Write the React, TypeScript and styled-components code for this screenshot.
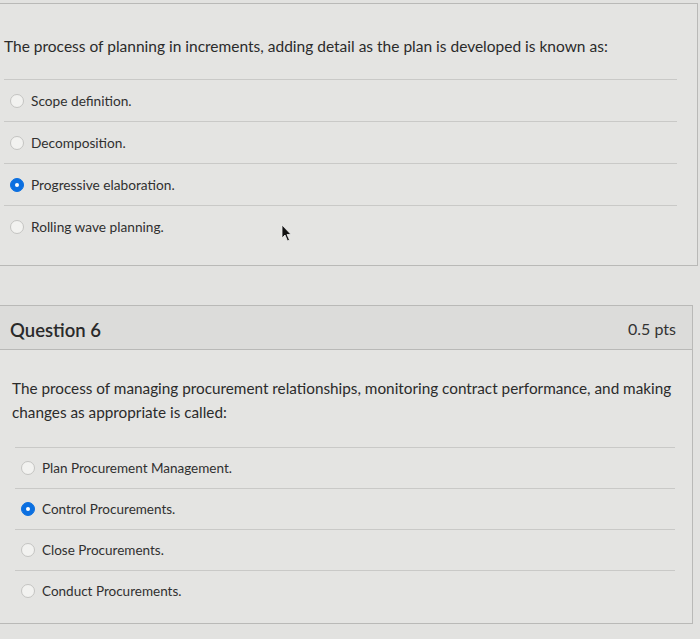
import React from "react";
import styled, { createGlobalStyle } from "styled-components";

const Global = createGlobalStyle`
  html, body { margin: 0; padding: 0; }
  body {
    background: #e2e2e0;
    font-family: Lato, "Open Sans", "Liberation Sans", sans-serif;
    color: #2d2d2d;
    width: 700px;
    height: 639px;
    overflow: hidden;
  }
`;

const Page = styled.div`
  position: relative;
  width: 700px;
  height: 639px;
  padding-top: 3px;
  box-sizing: border-box;
`;

const Card = styled.section<{ $right: number }>`
  border: 1px solid #b9b9b7;
  border-left: none;
  margin-right: ${(p) => p.$right}px;
  background: #e4e4e2;
`;

const Header = styled.header`
  display: flex;
  justify-content: space-between;
  align-items: center;
  height: 44px;
  padding: 4px 16px 0 10px;
  box-sizing: border-box;
  background: #dcdcda;
  border-bottom: 1px solid #b9b9b7;
`;

const Title = styled.h2`
  margin: 0;
  font-size: 18.5px;
  font-weight: 600;
  color: #2a2a2a;
`;

const Points = styled.span`
  font-size: 16px;
  color: #333;
  margin-bottom: 3px;
`;

const Body = styled.div<{ $pt: number; $pl: number; $pb: number }>`
  padding: ${(p) => p.$pt}px 0 ${(p) => p.$pb}px ${(p) => p.$pl}px;
`;

const QText = styled.p<{ $size: number }>`
  margin: 0;
  font-size: ${(p) => p.$size}px;
  line-height: 24px;
  color: #2b2b2b;
`;

const Answers = styled.ul<{ $mt: number; $ml: number; $mr: number }>`
  list-style: none;
  margin: ${(p) => p.$mt}px ${(p) => p.$mr}px 0 ${(p) => p.$ml}px;
  padding: 0;
`;

const Answer = styled.li<{ $h: number; $size: number }>`
  display: flex;
  align-items: center;
  gap: 7px;
  height: ${(p) => p.$h}px;
  border-top: 1px solid #c9c9c7;
  padding-left: 6px;
  font-size: ${(p) => p.$size}px;
  color: #303030;
`;

const Radio = styled.span<{ $on: boolean }>`
  width: 14px;
  height: 14px;
  border-radius: 50%;
  box-sizing: border-box;
  flex: none;
  display: flex;
  align-items: center;
  justify-content: center;
  background: ${(p) => (p.$on ? "#0b6fe0" : "#f2f2f0")};
  border: 1px solid ${(p) => (p.$on ? "#0b6fe0" : "#c4c4c2")};
  &::after {
    content: "";
    display: ${(p) => (p.$on ? "block" : "none")};
    width: 4px;
    height: 4px;
    border-radius: 50%;
    background: #fff;
  }
`;

const Gap = styled.div`
  height: 39px;
`;

const Cursor = styled.svg`
  position: absolute;
  left: 281px;
  top: 224px;
`;

const q1 = ["Scope definition.", "Decomposition.", "Progressive elaboration.", "Rolling wave planning."];
const q2 = ["Plan Procurement Management.", "Control Procurements.", "Close Procurements.", "Conduct Procurements."];

export default function App() {
  return (
    <Page>
      <Global />
      <Card $right={2}>
        <Body $pt={30} $pl={4} $pb={18}>
          <QText $size={15.5}>
            The process of planning in increments, adding detail as the plan is developed is known as:
          </QText>
          <Answers $mt={21} $ml={0} $mr={20}>
            {q1.map((a, i) => (
              <Answer key={a} $h={41} $size={13.7}>
                <Radio $on={i === 2} />
                {a}
              </Answer>
            ))}
          </Answers>
        </Body>
      </Card>
      <Gap />
      <Card $right={7}>
        <Header>
          <Title>Question 6</Title>
          <Points>0.5 pts</Points>
        </Header>
        <Body $pt={26} $pl={12} $pb={12}>
          <QText $size={15.3}>
            The process of managing procurement relationships, monitoring contract performance, and making changes
            as appropriate is called:
          </QText>
          <Answers $mt={23} $ml={3} $mr={17}>
            {q2.map((a, i) => (
              <Answer key={a} $h={40} $size={13.5}>
                <Radio $on={i === 1} />
                {a}
              </Answer>
            ))}
          </Answers>
        </Body>
      </Card>
      <Cursor width="12" height="19" viewBox="0 0 12 19">
        <path d="M1 1 L1 14 L4 11 L6.5 17 L8.5 16 L6 10.5 L10 10.5 Z" fill="#111" stroke="#eee" strokeWidth="0.8" />
      </Cursor>
    </Page>
  );
}
